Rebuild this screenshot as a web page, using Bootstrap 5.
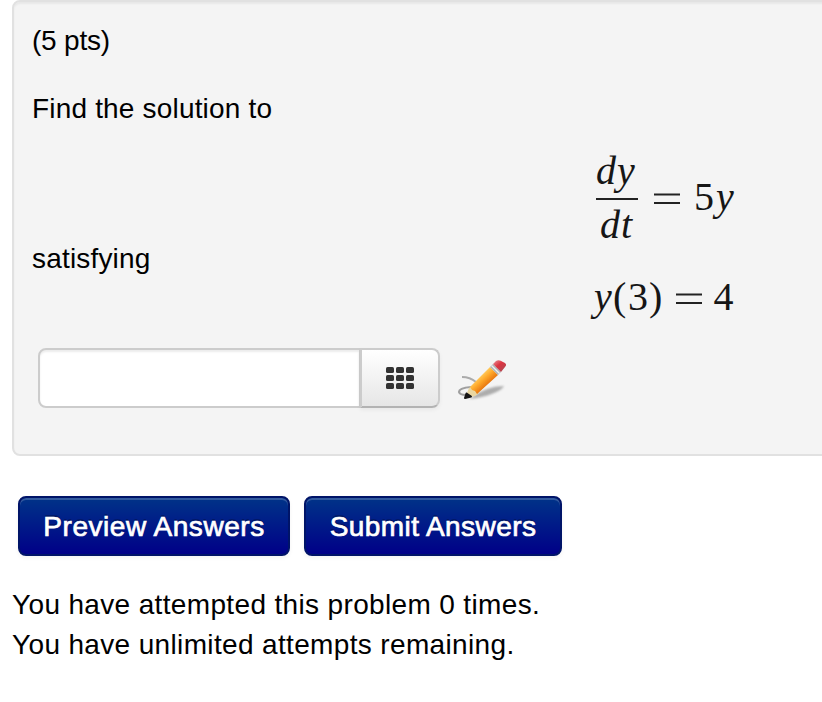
<!DOCTYPE html>
<html lang="en">
<head>
<meta charset="utf-8">
<meta name="viewport" content="width=device-width, initial-scale=1">
<title>Problem</title>
<link href="https://cdn.jsdelivr.net/npm/bootstrap@5.3.0/dist/css/bootstrap.min.css" rel="stylesheet">
<style>
body{font:28px/40px "Liberation Sans",Arial,sans-serif;color:#000;background:#fff;overflow:hidden}
.problem-well{width:840px;height:456px;margin-left:12px;padding:19px 18px 0;background:#f4f4f4;border:2px solid #e1e1e1;border-radius:8px;box-shadow:inset 0 2px 2px rgba(0,0,0,.05)}
.points{margin-bottom:28px;letter-spacing:-.2px}
.statement{height:220px;letter-spacing:.18px}
.prompt{width:560px}
.satisfying{margin-top:110px}
.math-block{width:150px;height:180px;margin:59px 0 0 -2px}
.math-block text{font:40px "Liberation Serif","Times New Roman",serif;fill:#161616;letter-spacing:0}
.math-block .var{font-style:italic}
.answer-row{margin:39px 0 0 6px}
.answer-group{width:402px;height:60px}
.answer-group .form-control{height:60px;border:2px solid #ccc;border-radius:8px 0 0 8px;box-shadow:inset 0 2px 2px rgba(0,0,0,.075)}
.answer-group .btn{width:80px;border:2px solid #ccc;border-bottom-color:#b3b3b3;border-radius:0 8px 8px 0;background:linear-gradient(#fff,#e6e6e6);box-shadow:0 2px 4px rgba(0,0,0,.05)}
.pencil{margin:2px 0 0 15px}
.actions{margin:40px 0 0 18px;gap:14px}
.btn-answer{height:60px;padding:1px 0 0;color:#fff;font-size:28px;line-height:55px;border:2px solid #001468;border-radius:8px;background:linear-gradient(#003388,#000088);box-shadow:inset 0 2px 0 rgba(255,255,255,.2),0 2px 4px rgba(0,0,0,.05);text-shadow:0 -2px 0 rgba(0,0,0,.25);-webkit-text-stroke:.7px #fff}
.btn-answer:hover{color:#fff}
.preview{width:272px;letter-spacing:.55px}.submit{width:258px;letter-spacing:.42px}
.attempts{margin:29px 0 0 12px;letter-spacing:.35px}
</style>
</head>
<body>
<main>
<section class="problem-well">
  <p class="points">(5 pts)</p>
  <div class="statement d-flex">
    <div class="prompt">
      <p class="mb-0">Find the solution to</p>
      <p class="satisfying mb-0">satisfying</p>
    </div>
    <svg class="math-block flex-shrink-0" viewBox="590 148 150 180" role="img" aria-label="dy/dt = 5y, y(3) = 4">
      <text class="var" x="596" y="184">d</text><text class="var" x="617" y="184">y</text>
      <path d="M596 199H638M654 194.5H680M654 203H680M676 294.5H702M676 303H702" stroke="#222" stroke-width="2"/>
      <text class="var" x="600" y="237.5">d</text><text class="var" x="621" y="237.5">t</text>
      <text x="694" y="209.5">5</text><text class="var" x="716" y="209.5">y</text>
      <text class="var" x="594" y="310">y</text><text x="613" y="310">(</text><text x="628" y="310">3</text><text x="649" y="310">)</text><text x="713.5" y="310">4</text>
    </svg>
  </div>
  <div class="answer-row d-flex">
    <div class="input-group answer-group flex-nowrap">
      <input class="form-control" type="text" aria-label="Answer">
      <button class="btn p-0 d-flex align-items-center justify-content-center" type="button" aria-label="Equation editor">
        <svg width="28" height="22" viewBox="0 0 28 22" fill="#333">
          <rect width="8" height="6" rx="1.6"/><rect x="10" width="8" height="6" rx="1.6"/><rect x="20" width="8" height="6" rx="1.6"/>
          <rect y="8" width="8" height="6" rx="1.6"/><rect x="10" y="8" width="8" height="6" rx="1.6"/><rect x="20" y="8" width="8" height="6" rx="1.6"/>
          <rect y="16" width="8" height="6" rx="1.6"/><rect x="10" y="16" width="8" height="6" rx="1.6"/><rect x="20" y="16" width="8" height="6" rx="1.6"/>
        </svg>
      </button>
    </div>
    <svg class="pencil" width="56" height="56" viewBox="0 0 56 56">
      <defs>
        <linearGradient id="wood" gradientUnits="userSpaceOnUse" x1="25" y1="25" x2="33" y2="34"><stop stop-color="#ffcf63"/><stop offset=".45" stop-color="#ffaa2c"/><stop offset="1" stop-color="#e87810"/></linearGradient>
        <linearGradient id="rubber" gradientUnits="userSpaceOnUse" x1="40" y1="9" x2="49" y2="20"><stop stop-color="#e8939a"/><stop offset=".5" stop-color="#dc3341"/><stop offset="1" stop-color="#b34851"/></linearGradient>
        <filter id="soft" x="-20%" y="-50%" width="140%" height="200%"><feGaussianBlur stdDeviation="1.2"/></filter>
        <filter id="edge"><feGaussianBlur stdDeviation=".4"/></filter>
      </defs>
      <path d="M14 49Q31 36 49 36Q45 43 22 48Z" fill="#666" opacity=".5" filter="url(#soft)"/>
      <g filter="url(#edge)">
        <path d="M7 27Q15 27 21 32" fill="none" stroke="#8b8b8b" stroke-width="2" opacity=".7"/>
        <path d="M16 37Q4 38 4 42Q5 45 11 45" fill="none" stroke="#8b8b8b" stroke-width="2.2" opacity=".8"/>
        <path d="M10 48L14 38L17 36L24 43L20 46Z" fill="#ead7a2"/>
        <path d="M15 37L35 17L43 25L22 44L20 41L17 40Z" fill="url(#wood)"/>
        <path d="M10 48L11.5 43.5L16 46.5Z" fill="#151515" stroke="#151515" stroke-width="2" stroke-linejoin="round"/>
        <path d="M35 17L38 14L46 22L43 25Z" fill="#aeb4b8"/><path d="M36.5 15.5L44.5 23.5" stroke="#eef1f2" stroke-width="1.3"/>
        <path d="M38 14L41 11Q44 9 48 12Q53 14 50 17L46 22Z" fill="url(#rubber)"/>
      </g>
    </svg>
  </div>
</section>
<div class="actions d-flex">
  <button class="btn btn-answer preview" type="button">Preview Answers</button>
  <button class="btn btn-answer submit" type="button">Submit Answers</button>
</div>
<p class="attempts mb-0">You have attempted this problem 0 times.<br>You have unlimited attempts remaining.</p>
</main>
<script src="https://cdn.jsdelivr.net/npm/bootstrap@5.3.0/dist/js/bootstrap.bundle.min.js"></script>
</body>
</html>
